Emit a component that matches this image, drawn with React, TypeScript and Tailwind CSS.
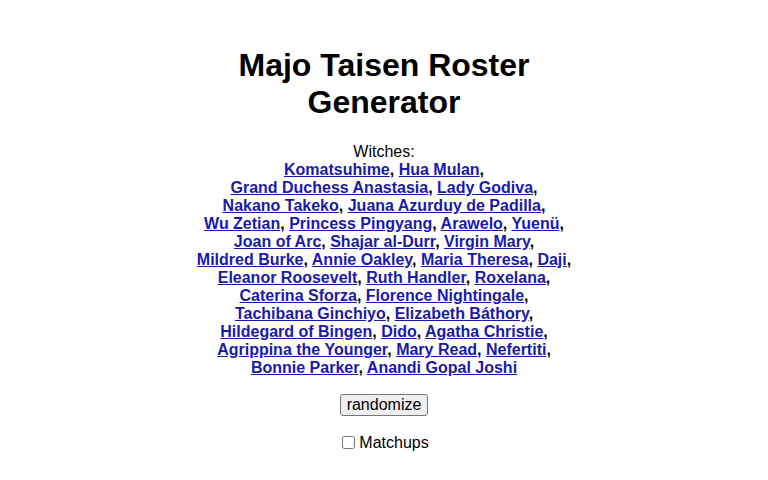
import React from "react";

const witches: string[] = [
  "Komatsuhime", "Hua Mulan",
  "Grand Duchess Anastasia", "Lady Godiva",
  "Nakano Takeko", "Juana Azurduy de Padilla",
  "Wu Zetian", "Princess Pingyang", "Arawelo", "Yuenü",
  "Joan of Arc", "Shajar al-Durr", "Virgin Mary",
  "Mildred Burke", "Annie Oakley", "Maria Theresa", "Daji",
  "Eleanor Roosevelt", "Ruth Handler", "Roxelana",
  "Caterina Sforza", "Florence Nightingale",
  "Tachibana Ginchiyo", "Elizabeth Báthory",
  "Hildegard of Bingen", "Dido", "Agatha Christie",
  "Agrippina the Younger", "Mary Read", "Nefertiti",
  "Bonnie Parker", "Anandi Gopal Joshi",
];

export default function App() {
  return (
    <div className="min-h-[480px] bg-white text-black font-['Liberation_Sans',Arial,sans-serif] text-[16px] leading-[18px]">
      <div className="w-[384px] mx-auto pt-[26px] text-center">
        <h1 className="text-[32px] font-bold my-[21.44px] leading-[37px]">
          Majo Taisen Roster Generator
        </h1>
        <div>Witches:</div>
        <div className="font-bold">
          {witches.map((w, i) => (
            <React.Fragment key={w}>
              <span className="whitespace-nowrap">
                <a href="#" className="text-[#1a1aaa] underline">
                  {w}
                </a>
                {i < witches.length - 1 ? "," : ""}
              </span>
              {i < witches.length - 1 ? " " : ""}
            </React.Fragment>
          ))}
        </div>
        <div className="mt-[17px]">
          <button className="bg-[#efefef] border border-[#767676] rounded-[3px] px-[6px] py-[1px] text-[16px] leading-[18px] text-black">
            randomize
          </button>
        </div>
        <div className="mt-[18px] flex items-center justify-center">
          <input type="checkbox" className="w-[13px] h-[13px] mr-[4px] ml-[3px]" />
          <span>Matchups</span>
        </div>
      </div>
    </div>
  );
}
